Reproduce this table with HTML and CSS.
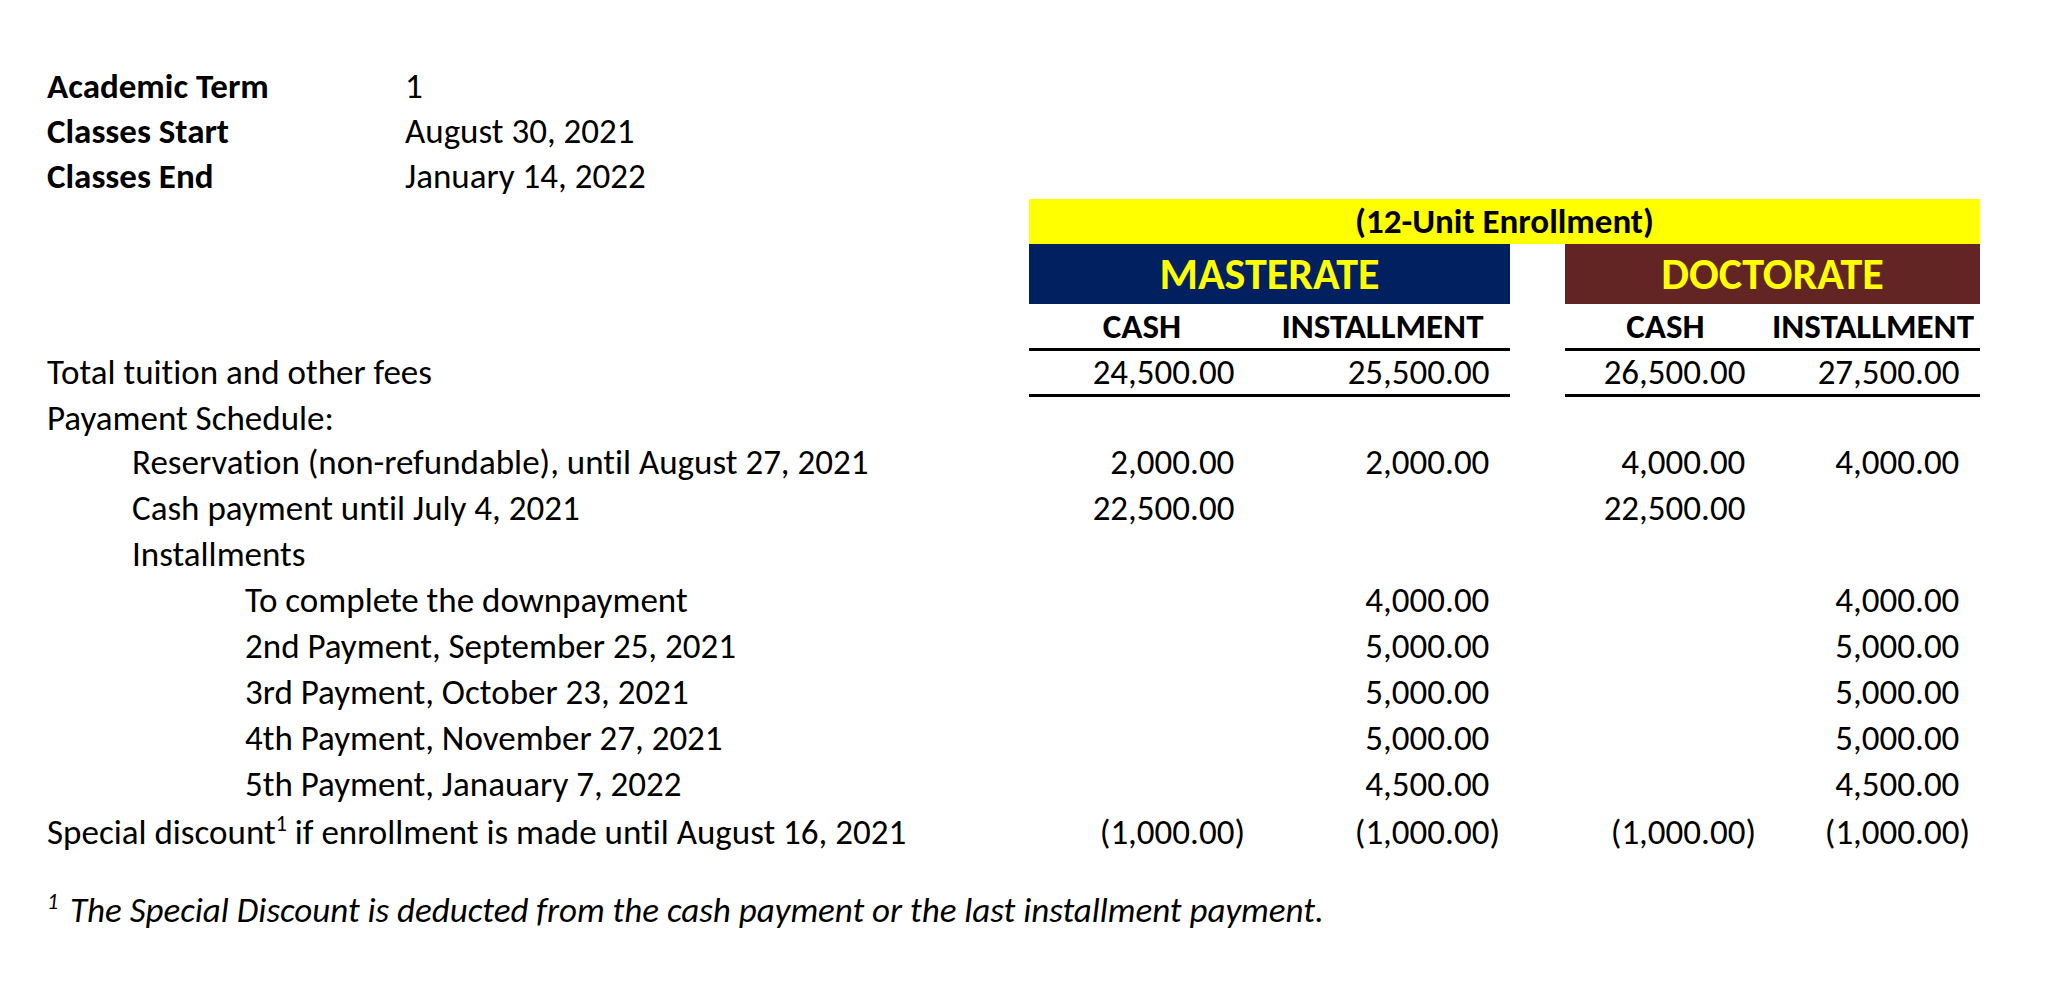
FILE: index.html
```html
<!DOCTYPE html>
<html lang="en">
<head>
<meta charset="utf-8">
<title>Tuition and Payment Schedule</title>
<link rel="stylesheet" href="styles.css">
</head>
<body>
<div class="sheet">
  <div class="info">
    <div class="info-label">Academic Term</div><div class="info-value">1</div>
    <div class="info-label">Classes Start</div><div class="info-value">August 30, 2021</div>
    <div class="info-label">Classes End</div><div class="info-value">January 14, 2022</div>
  </div>

  <div class="grid">
    <!-- enrollment banner -->
    <div class="blank"></div>
    <div class="banner">(12-Unit Enrollment)</div>

    <!-- program row -->
    <div class="blank"></div>
    <div class="program masterate">MASTERATE</div>
    <div class="blank"></div>
    <div class="program doctorate">DOCTORATE</div>

    <!-- column headers -->
    <div class="blank hdr-row"></div>
    <div class="colhead">CASH</div>
    <div class="colhead">INSTALLMENT</div>
    <div class="blank"></div>
    <div class="colhead">CASH</div>
    <div class="colhead">INSTALLMENT</div>

    <!-- totals -->
    <div class="label total-row">Total tuition and other fees</div>
    <div class="num total">24,500.00<span class="paren">)</span></div>
    <div class="num total">25,500.00<span class="paren">)</span></div>
    <div class="blank"></div>
    <div class="num total">26,500.00<span class="paren">)</span></div>
    <div class="num total">27,500.00<span class="paren">)</span></div>

    <div class="label first">Payament Schedule:</div>
    <div class="num"></div><div class="num"></div><div class="blank"></div><div class="num"></div><div class="num"></div>

    <div class="label indent1">Reservation (non-refundable), until August 27, 2021</div>
    <div class="num">2,000.00<span class="paren">)</span></div>
    <div class="num">2,000.00<span class="paren">)</span></div>
    <div class="blank"></div>
    <div class="num">4,000.00<span class="paren">)</span></div>
    <div class="num">4,000.00<span class="paren">)</span></div>

    <div class="label indent1">Cash payment until July 4, 2021</div>
    <div class="num">22,500.00<span class="paren">)</span></div>
    <div class="num"></div>
    <div class="blank"></div>
    <div class="num">22,500.00<span class="paren">)</span></div>
    <div class="num"></div>

    <div class="label indent1">Installments</div>
    <div class="num"></div><div class="num"></div><div class="blank"></div><div class="num"></div><div class="num"></div>

    <div class="label indent2">To complete the downpayment</div>
    <div class="num"></div>
    <div class="num">4,000.00<span class="paren">)</span></div>
    <div class="blank"></div>
    <div class="num"></div>
    <div class="num">4,000.00<span class="paren">)</span></div>

    <div class="label indent2">2nd Payment, September 25, 2021</div>
    <div class="num"></div>
    <div class="num">5,000.00<span class="paren">)</span></div>
    <div class="blank"></div>
    <div class="num"></div>
    <div class="num">5,000.00<span class="paren">)</span></div>

    <div class="label indent2">3rd Payment, October 23, 2021</div>
    <div class="num"></div>
    <div class="num">5,000.00<span class="paren">)</span></div>
    <div class="blank"></div>
    <div class="num"></div>
    <div class="num">5,000.00<span class="paren">)</span></div>

    <div class="label indent2">4th Payment, November 27, 2021</div>
    <div class="num"></div>
    <div class="num">5,000.00<span class="paren">)</span></div>
    <div class="blank"></div>
    <div class="num"></div>
    <div class="num">5,000.00<span class="paren">)</span></div>

    <div class="label indent2">5th Payment, Janauary 7, 2022</div>
    <div class="num"></div>
    <div class="num">4,500.00<span class="paren">)</span></div>
    <div class="blank"></div>
    <div class="num"></div>
    <div class="num">4,500.00<span class="paren">)</span></div>

    <div class="label special">Special discount<sup class="fnmark">1</sup> if enrollment is made until August 16, 2021</div>
    <div class="num special">(1,000.00)</div>
    <div class="num special">(1,000.00)</div>
    <div class="blank"></div>
    <div class="num special">(1,000.00)</div>
    <div class="num special">(1,000.00)</div>
  </div>

  <p class="footnote"><sup class="fnmark">1</sup> The Special Discount is deducted from the cash payment or the last installment payment.</p>
</div>
</body>
</html>
```

FILE: styles.css
```css
html, body {
  margin: 0;
  padding: 0;
  background: #ffffff;
}

body {
  font-family: Carlito, Calibri, Lato, "Liberation Sans", sans-serif;
  font-size: 35px;
  color: #000000;
  font-variant-ligatures: none;
  font-feature-settings: "liga" 0, "dlig" 0;
}

.sheet {
  padding-top: 64px;
}

.info {
  display: grid;
  grid-template-columns: 358px auto;
  grid-auto-rows: 45px;
  padding-left: 47px;
  line-height: 45px;
}

.info-label {
  font-weight: bold;
}

.grid {
  display: grid;
  grid-template-columns: 1029px 226px 255px 55px 201px 214px;
  line-height: 46px;
}

.blank {
  min-height: 0;
}

.banner {
  grid-column: 2 / 7;
  background: #ffff00;
  font-weight: bold;
  text-align: center;
  height: 45px;
  line-height: 45px;
}

.program {
  height: 60px;
  line-height: 60px;
  color: #ffff00;
  font-weight: bold;
  font-size: 44px;
  text-align: center;
}

.masterate {
  grid-column: 2 / 4;
  background: #002060;
}

.doctorate {
  grid-column: 5 / 7;
  background: #632523;
}

.colhead {
  font-weight: bold;
  text-align: center;
  height: 44px;
  line-height: 44px;
  border-bottom: 3px solid #000000;
  white-space: nowrap;
}

.hdr-row {
  height: 47px;
}

.label {
  padding-left: 47px;
  white-space: nowrap;
}

.label.first {
  line-height: 42px;
}

.indent1 {
  padding-left: 132px;
}

.indent2 {
  padding-left: 245px;
}

.total-row {
  line-height: 43px;
}

.num {
  text-align: right;
  padding-right: 10px;
  white-space: nowrap;
}

.num.total {
  line-height: 43px;
  border-bottom: 3px solid #000000;
}

.paren {
  visibility: hidden;
}

.special {
  line-height: 50px;
}

.fnmark {
  font-size: 22px;
  line-height: 0;
  vertical-align: 13px;
}

.footnote {
  margin: 29px 0 0 0;
  padding-left: 47px;
  font-style: italic;
  line-height: 48px;
}

.footnote .fnmark {
  margin-right: 4px;
}
```
